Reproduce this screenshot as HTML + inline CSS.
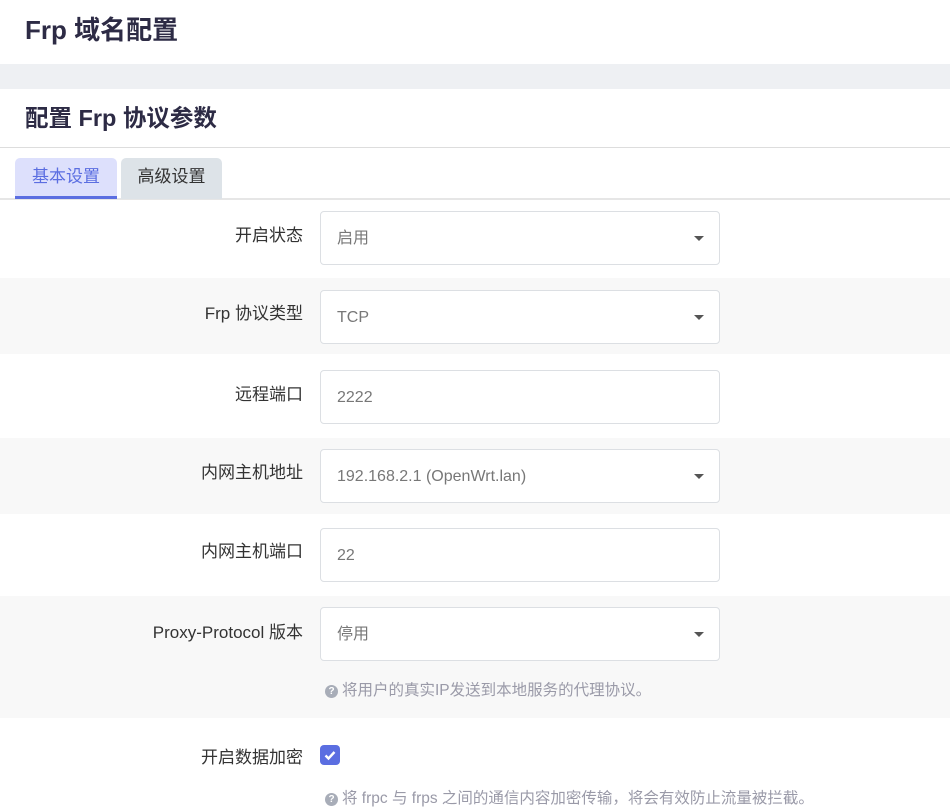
<!DOCTYPE html>
<html><head><meta charset="utf-8"><style>
*{box-sizing:border-box;margin:0;padding:0}
body{width:950px;height:804px;overflow:hidden;background:#fff;font-family:"Liberation Sans","Noto Sans CJK SC",sans-serif;color:#333}
.h1{height:64px;padding:10px 25px;font-size:26px;font-weight:bold;color:#2d2b45}
.band{height:25px;background:#eef0f3}
.h2{height:59px;border-bottom:1px solid #ddd;padding:10px 25px;font-size:23.5px;font-weight:bold;color:#2d2b45}
.tabs{height:52px;border-bottom:2px solid #e6e6e6;position:relative}
.tab{position:absolute;top:10px;height:41px;border-radius:5px 5px 0 0;font-size:17px;line-height:38px;text-align:center}
.row{position:absolute;left:0;width:950px}
.g{background:#f8f8f8}
.lab{position:absolute;right:647px;font-size:17px;color:#333;text-align:right;white-space:nowrap}
.inp{position:absolute;left:320px;width:400px;height:54px;border:1px solid #dcdfe3;border-radius:4px;background:#fff;font-size:16px;color:#777;padding:0 16px;line-height:54px}
.arr{position:absolute;right:15px;top:24px;border-left:5px solid transparent;border-right:5px solid transparent;border-top:5px solid #555}
.hint{position:absolute;left:325px;font-size:15.5px;color:#9a9aa8;white-space:nowrap}
.q{display:inline-block;width:13px;height:13px;border-radius:50%;background:#a8adb8;color:#fff;font-size:10px;line-height:13px;text-align:center;font-weight:bold;vertical-align:1px;margin-right:4px}
</style></head><body>
<div class="h1">Frp 域名配置</div>
<div class="band"></div>
<div class="h2">配置 Frp 协议参数</div>
<div class="tabs">
<div class="tab" style="left:15px;width:102px;background:#dde0fc;color:#5b6ee1;border-bottom:3px solid #5b6ee1">基本设置</div>
<div class="tab" style="left:121px;width:101px;background:#dde3e8;color:#333">高级设置</div>
</div>
<div class="row" style="top:200px;height:78px"><div class="lab" style="top:21px">开启状态</div><div class="inp" style="top:11px">启用<span class="arr"></span></div></div>
<div class="row g" style="top:278px;height:76px"><div class="lab" style="top:21px">Frp 协议类型</div><div class="inp" style="top:12px">TCP<span class="arr"></span></div></div>
<div class="row" style="top:354px;height:84px"><div class="lab" style="top:26px">远程端口</div><div class="inp" style="top:16px">2222</div></div>
<div class="row g" style="top:438px;height:76px"><div class="lab" style="top:20px">内网主机地址</div><div class="inp" style="top:11px">192.168.2.1 (OpenWrt.lan)<span class="arr"></span></div></div>
<div class="row" style="top:514px;height:82px"><div class="lab" style="top:23px">内网主机端口</div><div class="inp" style="top:14px">22</div></div>
<div class="row g" style="top:596px;height:122px"><div class="lab" style="top:22px">Proxy-Protocol 版本</div><div class="inp" style="top:11px">停用<span class="arr"></span></div><div class="hint" style="top:82px"><span class="q">?</span>将用户的真实IP发送到本地服务的代理协议。</div></div>
<div class="row" style="top:718px;height:86px"><div class="lab" style="top:25px">开启数据加密</div>
<div style="position:absolute;left:320px;top:27px;width:20px;height:20px;border-radius:4px;background:#5b6ee1"><svg width="20" height="20"><path d="M5.5 10.5l3 3 6-6.5" stroke="#fff" stroke-width="2.4" fill="none"/></svg></div>
<div class="hint" style="top:68px"><span class="q">?</span>将 frpc 与 frps 之间的通信内容加密传输，将会有效防止流量被拦截。</div></div>
</body></html>
